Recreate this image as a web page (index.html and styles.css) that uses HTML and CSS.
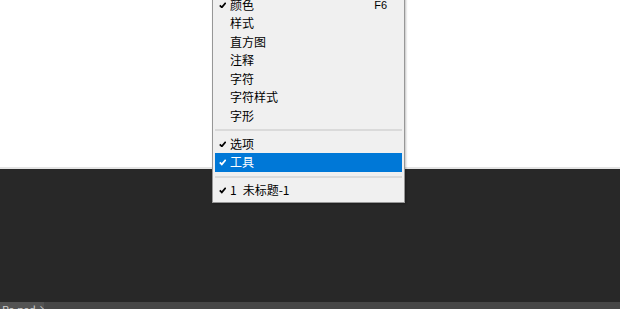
FILE: index.html
```html
<!DOCTYPE html>
<html lang="zh-CN">
<head>
    <meta charset="UTF-8">
    <title>窗口菜单</title>
    <link rel="stylesheet" href="styles.css">
</head>
<body>
    <div class="doc"></div>
    <div class="workspace"></div>
    <div class="tabbar">
        <div class="tab">Ps.psd ×</div>
    </div>

    <!-- Window menu popup -->
    <div class="menu">
        <div class="item checked">
            <span class="check"><svg viewBox="0 0 8 7" width="7.5" height="6.5"><path d="M0.8 3.6 L3 5.8 L7.2 0.9"/></svg></span>
            <span class="label">颜色</span>
            <span class="key">F6</span>
        </div>
        <div class="item"><span class="check"></span><span class="label">样式</span></div>
        <div class="item"><span class="check"></span><span class="label">直方图</span></div>
        <div class="item"><span class="check"></span><span class="label">注释</span></div>
        <div class="item"><span class="check"></span><span class="label">字符</span></div>
        <div class="item"><span class="check"></span><span class="label">字符样式</span></div>
        <div class="item"><span class="check"></span><span class="label">字形</span></div>
        <div class="sep"></div>
        <div class="item checked">
            <span class="check"><svg viewBox="0 0 8 7" width="7.5" height="6.5"><path d="M0.8 3.6 L3 5.8 L7.2 0.9"/></svg></span>
            <span class="label">选项</span>
        </div>
        <div class="item checked active">
            <span class="check"><svg viewBox="0 0 8 7" width="7.5" height="6.5"><path d="M0.8 3.6 L3 5.8 L7.2 0.9"/></svg></span>
            <span class="label">工具</span>
        </div>
        <div class="sep"></div>
        <div class="item checked">
            <span class="check"><svg viewBox="0 0 8 7" width="7.5" height="6.5"><path d="M0.8 3.6 L3 5.8 L7.2 0.9"/></svg></span>
            <span class="label"><span class="num">1</span>未标题-1</span>
        </div>
    </div>
</body>
</html>
```

FILE: styles.css
```css
body {
    margin: 0;
    width: 620px;
    height: 309px;
    overflow: hidden;
    display: flex;
    flex-direction: column;
    position: relative;
    font-family: "Noto Sans CJK SC", "Noto Sans", sans-serif;
    font-size: 12px;
    background: #282828;
}

/* White document area */
.doc {
    height: 167px;
    background: #ffffff;
    border-bottom: 2px solid #e4e4e4;
}

.workspace {
    flex: 1;
    background: #282828;
}

/* Bottom tab strip, cut off by the window */
.tabbar {
    height: 7px;
    background: #474747;
    overflow: hidden;
    display: flex;
}

.tab {
    width: 42px;
    background: #535353;
    color: #d0d0d0;
    font-size: 11px;
    line-height: 14px;
    padding-left: 2px;
    white-space: nowrap;
    overflow: hidden;
}

/* Popup menu */
.menu {
    position: absolute;
    left: 212px;
    top: -7.25px;
    width: 193px;
    box-sizing: border-box;
    padding: 2px;
    background: #f0f0f0;
    border: 1px solid #979797;
    box-shadow: 1px 1px 2px rgba(0, 0, 0, 0.25);
}

.item {
    height: 18.5px;
    display: flex;
    align-items: center;
    color: #000000;
    line-height: 18.5px;
}

.item.active {
    background: #0078d7;
    color: #ffffff;
}

.check {
    width: 15px;
    padding-left: 3.5px;
    box-sizing: border-box;
    display: flex;
    align-items: center;
}

.check svg path {
    fill: none;
    stroke: #000000;
    stroke-width: 1.9;
}

.item.active .check svg path {
    stroke: #ffffff;
}

.label {
    flex: 1;
}

.num {
    margin-right: 6px;
}

.key {
    padding-right: 15px;
    font-family: "Liberation Sans", sans-serif;
    font-size: 11px;
}

.sep {
    height: 9.5px;
    display: flex;
    align-items: center;
}

.sep::after {
    content: "";
    flex: 1;
    height: 2px;
    background: #dadada;
}
```
